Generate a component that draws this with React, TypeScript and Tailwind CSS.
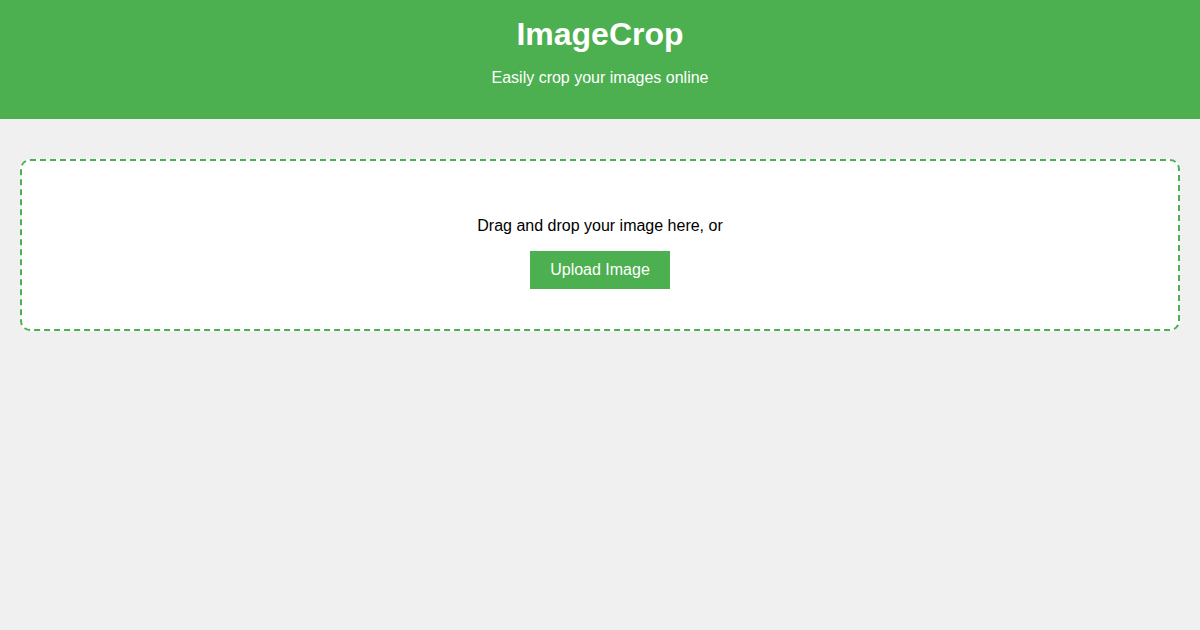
export default function App() {
	return (
		<div className="min-h-[630px] bg-[#f0f0f0] font-['Liberation_Sans',Arial,sans-serif] text-black">
			<header className="bg-[#4caf50] p-4 text-center text-white">
				<h1 className="text-[32px] font-bold leading-[37px]">ImageCrop</h1>
				<p className="my-4 text-base leading-[18px]">Easily crop your images online</p>
			</header>

			<main className="px-5 pt-10">
				<div className="rounded-[10px] border-2 border-dashed border-[#4caf50] bg-white p-10 text-center">
					<p className="my-4 text-base leading-[18px]">Drag and drop your image here, or</p>
					<button className="bg-[#4caf50] px-5 py-[10px] text-base leading-[18px] text-white">
						Upload Image
					</button>
				</div>
			</main>
		</div>
	)
}
